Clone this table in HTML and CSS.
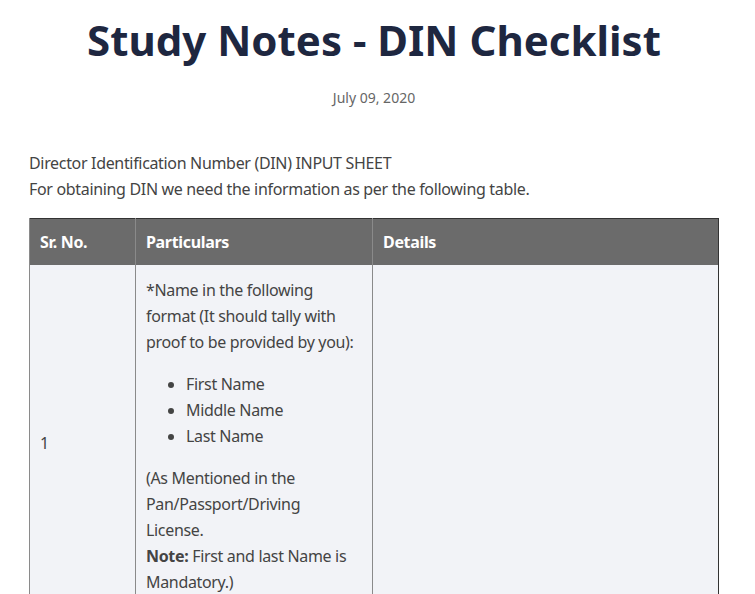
FILE: index.html
```html
<!DOCTYPE html>
<html>
<head>
<meta charset="utf-8">
<link rel="stylesheet" href="styles.css">
</head>
<body>
<main class="page">
  <h1 class="title">Study Notes - DIN Checklist</h1>
  <p class="date">July 09, 2020</p>
  <div class="intro">
    <p>Director Identification Number (DIN) INPUT SHEET<br>For obtaining DIN we need the information as per the following table.</p>
  </div>
  <table class="din">
    <thead>
      <tr><th class="c1">Sr. No.</th><th class="c2">Particulars</th><th class="c3">Details</th></tr>
    </thead>
    <tbody>
      <tr>
        <td>1</td>
        <td class="particulars">
          <p>*Name in the following format (It should tally with proof to be provided by you):</p>
          <ul>
            <li>First Name</li>
            <li>Middle Name</li>
            <li>Last Name</li>
          </ul>
          <p>(As Mentioned in the Pan/Passport/Driving<br>License.<br><strong>Note:</strong> First and last Name is Mandatory.)</p>
        </td>
        <td></td>
      </tr>
    </tbody>
  </table>
</main>
</body>
</html>
```
FILE: styles.css
```css
html, body { margin: 0; padding: 0; background: #fff; }
body { font-family: "Noto Sans", "Open Sans", sans-serif; color: #444; letter-spacing: -0.33px; }
.page { width: 690px; padding: 0 36px 0 29px; }
.title { margin: 13px 0 0; text-align: center; font-size: 42px; line-height: 54px; font-weight: 700; color: #1e2740; letter-spacing: 0; }
.date { margin: 21px 0 0; text-align: center; font-size: 14px; line-height: 20px; color: #666; letter-spacing: 0; }
.intro p { margin: 42px 0 0; font-size: 16px; line-height: 26px; }
.din { margin-top: 16px; width: 690px; border-collapse: collapse; border: 1px solid #333; font-size: 16px; line-height: 26px; }
.din th { background: #6b6b6b; color: #fff; text-align: left; font-weight: 700; padding: 10px 10px; height: 26px; border-left: 1px solid #8a8a8a; }
.din th.c1 { width: 85px; }
.din th.c2 { width: 216px; }
.din td { background: #f2f3f7; vertical-align: middle; padding: 12px 10px; border-left: 1px solid #8a8a8a; }
.din td.particulars { padding-bottom: 26px; }
.din td p { margin: 0; }
.din ul { margin: 16px 0; padding-left: 40px; }
```
